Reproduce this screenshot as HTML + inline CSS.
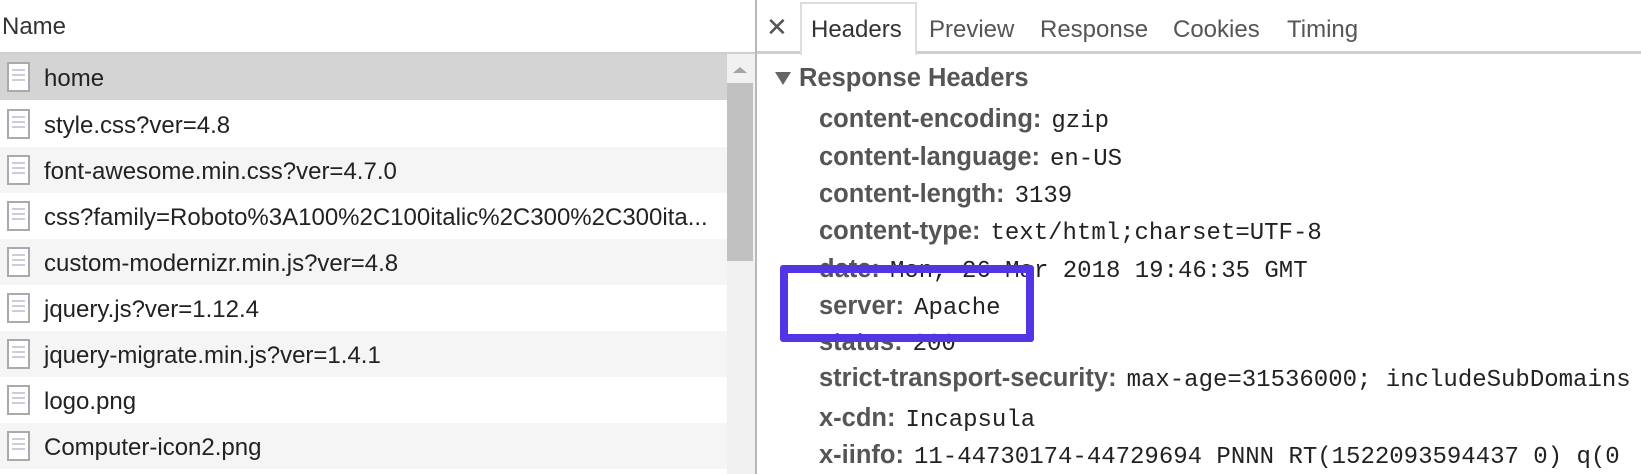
<!DOCTYPE html>
<html><head><meta charset="utf-8"><style>
*{margin:0;padding:0;box-sizing:border-box}
body{width:1641px;height:474px;overflow:hidden;background:#fff;font-family:"Liberation Sans",sans-serif;position:relative;color:#333}
.abs{position:absolute}
.lh{left:0;top:0;width:755px;height:54px;border-bottom:2px solid #cfcfcf}
.lh span{position:absolute;left:2px;top:13px;font-size:24px;color:#333}
.row{position:absolute;left:0;width:727px;height:46px;font-size:24px;line-height:50px;padding-left:44px;white-space:nowrap;overflow:hidden;color:#222}
.row i{position:absolute;left:7px;top:8px;width:23px;height:30px;border:2px solid #aaa;background:#fff}
.row i:before{content:"";position:absolute;left:3px;top:5px;width:13px;height:15px;background:repeating-linear-gradient(#ccd 0 2px,transparent 2px 5px)}
.g{background:#f5f5f5}.s{background:#d4d4d4}
.sb{left:727px;top:54px;width:28px;height:420px;background:#f1f1f1}
.thumb{left:727px;top:83px;width:26px;height:178px;background:#c1c1c1}
.div{left:755px;top:0;width:2px;height:474px;background:#b8b8b8}
.tabs{left:757px;top:0;width:884px;height:54px;border-bottom:3px solid #cfcfcf}
.tab{position:absolute;top:16px;font-size:24px;color:#555}
.k{position:absolute;left:819px;font-size:25.5px;font-weight:bold;color:#555;white-space:nowrap}
.k b{font-family:"Liberation Mono",monospace;font-weight:normal;color:#222;font-size:24px;margin-left:10px}
</style></head><body>
<div class="abs lh"><span>Name</span></div>
<div class="row s" style="top:54px"><i></i>home</div>
<div class="row" style="top:101px"><i></i>style.css?ver=4.8</div>
<div class="row g" style="top:147px"><i></i>font-awesome.min.css?ver=4.7.0</div>
<div class="row" style="top:193px"><i></i>css?family=Roboto%3A100%2C100italic%2C300%2C300ita...</div>
<div class="row g" style="top:239px"><i></i>custom-modernizr.min.js?ver=4.8</div>
<div class="row" style="top:285px"><i></i>jquery.js?ver=1.12.4</div>
<div class="row g" style="top:331px"><i></i>jquery-migrate.min.js?ver=1.4.1</div>
<div class="row" style="top:377px"><i></i>logo.png</div>
<div class="row g" style="top:423px"><i></i>Computer-icon2.png</div>
<div class="abs sb"></div>
<div class="abs" style="left:733px;top:67px;width:0;height:0;border-left:7px solid transparent;border-right:7px solid transparent;border-bottom:6px solid #a3a3a3"></div>
<div class="abs thumb"></div>
<div class="abs div"></div>
<div class="abs tabs"></div>
<div class="abs" style="left:766px;top:12px;font-size:26px;color:#555">✕</div>
<div class="abs" style="left:800px;top:2px;width:117px;height:53px;border:2px solid #ddd;border-bottom:none;background:#fff"></div>
<div class="tab" style="left:811px;color:#333">Headers</div>
<div class="tab" style="left:929px">Preview</div>
<div class="tab" style="left:1040px">Response</div>
<div class="tab" style="left:1173px">Cookies</div>
<div class="tab" style="left:1287px">Timing</div>
<div class="abs" style="left:775px;top:72px;width:0;height:0;border-left:8px solid transparent;border-right:8px solid transparent;border-top:13px solid #666"></div>
<div class="k" style="left:799px;top:64px">Response Headers</div>
<div class="k" style="top:105px">content-encoding:<b>gzip</b></div>
<div class="k" style="top:143px">content-language:<b>en-US</b></div>
<div class="k" style="top:180px">content-length:<b>3139</b></div>
<div class="k" style="top:217px">content-type:<b>text/html;charset=UTF-8</b></div>
<div class="k" style="top:255px">date:<b>Mon, 26 Mar 2018 19:46:35 GMT</b></div>
<div class="k" style="top:292px">server:<b>Apache</b></div>
<div class="k" style="top:328px">status:<b>200</b></div>
<div class="k" style="top:364px">strict-transport-security:<b>max-age=31536000; includeSubDomains</b></div>
<div class="k" style="top:404px">x-cdn:<b>Incapsula</b></div>
<div class="k" style="top:441px">x-iinfo:<b>11-44730174-44729694 PNNN RT(1522093594437 0) q(0</b></div>
<div class="abs" style="left:780px;top:265px;width:254px;height:77px;border:8px solid #5236e6;border-radius:3px"></div>
</body></html>
